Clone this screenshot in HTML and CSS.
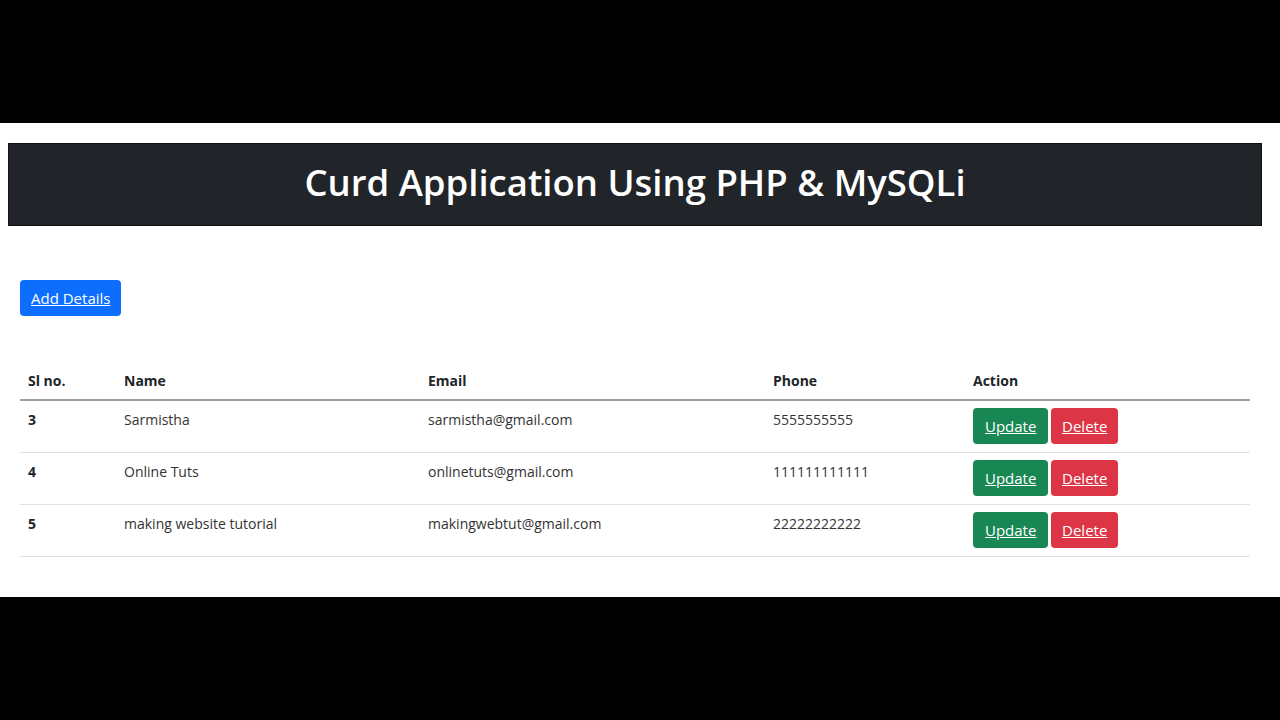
FILE: index.html
```html
<!DOCTYPE html>
<html lang="en">
<head>
    <meta charset="UTF-8">
    <meta name="viewport" content="width=device-width, initial-scale=1.0">
    <title>Curd Application</title>
    <link rel="stylesheet" href="styles.css">
</head>
<body>
    <div class="bar"></div>

    <div class="page">
        <h1 class="page-title">Curd Application Using PHP &amp; MySQLi</h1>

        <div class="content">
            <button class="btn btn-primary"><a href="#">Add Details</a></button>

            <table class="table">
                <thead>
                    <tr>
                        <th class="col-id">Sl no.</th>
                        <th class="col-name">Name</th>
                        <th class="col-email">Email</th>
                        <th class="col-phone">Phone</th>
                        <th>Action</th>
                    </tr>
                </thead>
                <tbody>
                    <tr>
                        <th>3</th>
                        <td>Sarmistha</td>
                        <td>sarmistha@gmail.com</td>
                        <td>5555555555</td>
                        <td>
                            <button class="btn btn-success"><a href="#">Update</a></button>
                            <button class="btn btn-danger"><a href="#">Delete</a></button>
                        </td>
                    </tr>
                    <tr>
                        <th>4</th>
                        <td>Online Tuts</td>
                        <td>onlinetuts@gmail.com</td>
                        <td>111111111111</td>
                        <td>
                            <button class="btn btn-success"><a href="#">Update</a></button>
                            <button class="btn btn-danger"><a href="#">Delete</a></button>
                        </td>
                    </tr>
                    <tr>
                        <th>5</th>
                        <td>making website tutorial</td>
                        <td>makingwebtut@gmail.com</td>
                        <td>22222222222</td>
                        <td>
                            <button class="btn btn-success"><a href="#">Update</a></button>
                            <button class="btn btn-danger"><a href="#">Delete</a></button>
                        </td>
                    </tr>
                </tbody>
            </table>
        </div>
    </div>

    <div class="bar"></div>
</body>
</html>
```

FILE: styles.css
```css
* {
    box-sizing: border-box;
    margin: 0;
    padding: 0;
}

body {
    background-color: #000;
    font-family: 'Open Sans', 'Noto Sans', sans-serif;
    color: #212529;
    font-size: 14px;
    height: 720px;
    display: flex;
    flex-direction: column;
}

.bar {
    height: 123px;
    background-color: #000;
}

.page {
    height: 474px;
    background-color: #fff;
    padding-top: 20px;
}

.page-title {
    margin-left: 8px;
    width: 1254px;
    height: 83px;
    background-color: #212529;
    border: 1px solid #111;
    color: #fff;
    font-size: 36.5px;
    font-weight: 600;
    text-align: center;
    line-height: 76px;
}

.content {
    padding: 54px 30px 0 20px;
}

.btn {
    display: inline-block;
    height: 36px;
    padding: 0 12px;
    border: none;
    border-radius: 4px;
    font-family: inherit;
    font-size: 15px;
    line-height: 36px;
    vertical-align: top;
    cursor: pointer;
}

.btn a {
    color: #fff;
}

.btn-primary {
    background-color: #0d6efd;
    padding: 0 11px;
}

.btn-success {
    background-color: #198754;
}

.btn-danger {
    background-color: #dc3545;
    margin-left: -1px;
    padding: 0 11px;
}

.table {
    margin-top: 45px;
    width: 100%;
    border-collapse: collapse;
}

.table th,
.table td {
    text-align: left;
    vertical-align: top;
    padding: 8px;
    line-height: 24px;
}

.table thead th {
    font-weight: 700;
    padding: 8px 8px 6px;
    border-bottom: 2px solid #a0a0a0;
}

.table tbody th,
.table tbody td {
    border-bottom: 1px solid #dee2e6;
    height: 52px;
    padding: 7px 8px 0;
}

.table tbody td {
    color: #333;
}

.table tbody th {
    font-weight: 700;
}

.col-id {
    width: 96px;
}

.col-name {
    width: 304px;
}

.col-email {
    width: 345px;
}

.col-phone {
    width: 200px;
}
```
